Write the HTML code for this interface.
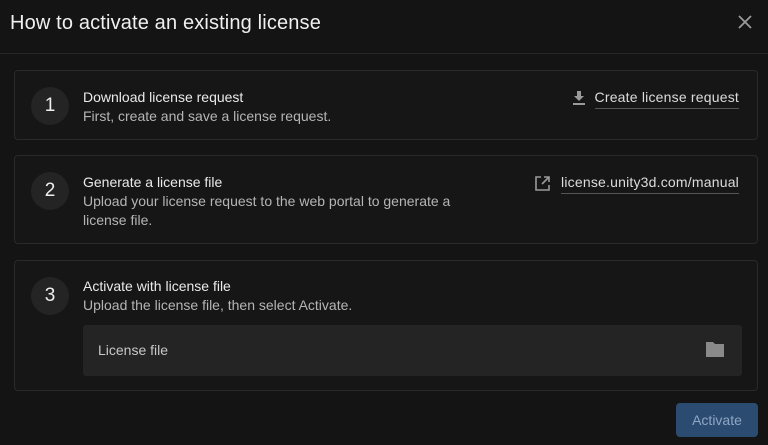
<!DOCTYPE html>
<html><head><style>
*{margin:0;padding:0;box-sizing:border-box}
body{width:768px;height:445px;background:#141414;font-family:"Liberation Sans",sans-serif;color:#e6e6e6;position:relative;overflow:hidden}
.title{position:absolute;left:10px;top:12px;font-size:20px;color:#f0f0f0;letter-spacing:0.15px}
.close{position:absolute;left:737px;top:14px}
.sep{position:absolute;left:0;top:53px;width:768px;height:1px;background:#262626}
.card{position:absolute;left:14px;width:744px;border:1px solid #2a2a2a;border-radius:4px;background:#161616}
.num{position:absolute;left:16px;width:38px;height:38px;border-radius:50%;background:#242424;color:#eee;font-size:19px;text-align:center;line-height:38px}
.h{position:absolute;left:68px;font-size:14px;color:#eaeaea}
.d{position:absolute;left:68px;font-size:14px;color:#b5b5b5;line-height:19px;width:400px}
.link{position:absolute;right:18px;font-size:14px;color:#dcdcdc;border-bottom:1px solid #555;padding-bottom:3px;letter-spacing:0.2px}
.input{position:absolute;left:68px;top:64px;width:659px;height:51px;background:#242424;border-radius:3px}
.btn{position:absolute;left:676px;top:403px;width:82px;height:34px;background:#2c4b70;border-radius:4px;color:#8ea6c4;font-size:14px;text-align:center;line-height:34px}
</style></head><body>
<div class="title">How to activate an existing license</div>
<svg class="close" width="16" height="16" viewBox="0 0 16 16"><path d="M2 2L14 14M14 2L2 14" stroke="#9a9a9a" stroke-width="1.8"/></svg>
<div class="sep"></div>
<div class="card" style="top:70px;height:70px">
 <div class="num" style="top:16px">1</div>
 <div class="h" style="top:18px">Download license request</div>
 <div class="d" style="top:36px">First, create and save a license request.</div>
 <svg style="position:absolute;left:557px;top:19px" width="14" height="16" viewBox="0 0 14 16"><path d="M5 1h4v5h3L7 11 2 6h3z M1 13h12v2H1z" fill="#9a9a9a"/></svg>
 <div class="link" style="top:18px">Create license request</div>
</div>
<div class="card" style="top:155px;height:89px">
 <div class="num" style="top:16px">2</div>
 <div class="h" style="top:18px">Generate a license file</div>
 <div class="d" style="top:36px">Upload your license request to the web portal to generate a license file.</div>
 <svg style="position:absolute;left:520px;top:20px" width="15" height="15" viewBox="0 0 15 15"><path d="M6 1H1v13h13V9M9 1h5v5M14 1L7 8" stroke="#9a9a9a" stroke-width="1.6" fill="none"/></svg>
 <div class="link" style="top:18px">license.unity3d.com/manual</div>
</div>
<div class="card" style="top:260px;height:131px">
 <div class="num" style="top:16px">3</div>
 <div class="h" style="top:17px">Activate with license file</div>
 <div class="d" style="top:35px">Upload the license file, then select Activate.</div>
 <div class="input">
  <div style="position:absolute;left:15px;top:17px;font-size:14px;color:#c8c8c8">License file</div>
  <svg style="position:absolute;left:622px;top:16px" width="20" height="17" viewBox="0 0 20 17"><path d="M1 1h7l2 2h9v13H1z" fill="#8a8a8a"/></svg>
 </div>
</div>
<div class="btn">Activate</div>
</body></html>
